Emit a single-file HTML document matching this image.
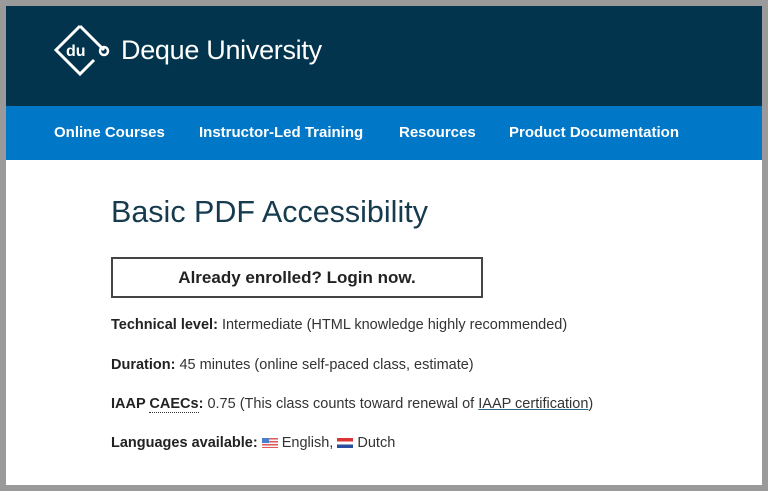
<!DOCTYPE html>
<html><head><style>
body{margin:0;width:768px;height:491px;background:#9a9a9a;font-family:"Liberation Sans",sans-serif;overflow:hidden}
#f{position:absolute;left:6px;top:6px;width:756px;height:479px;background:#fff;overflow:hidden}
#hd{height:100px;background:#02344d;position:relative}
#hd .t{position:absolute;left:115px;top:29px;color:#fff;font-size:27px;font-weight:300;letter-spacing:-0.3px}
#nav{height:54px;background:#0177c8;color:#fff;font-weight:bold;font-size:15px}
#nav span{position:absolute;top:118px}
h1{position:absolute;left:105px;top:189px;margin:0;font-weight:normal;font-size:30.5px;color:#163a4e}
.btn{position:absolute;left:105px;top:251px;width:368px;height:37px;border:2px solid #444;text-align:center;line-height:37px;font-size:17px;font-weight:bold;color:#222}
p{position:absolute;left:105px;margin:0;font-size:14.5px;color:#333}
b{color:#222}
.u{text-decoration:underline;text-decoration-color:#2a6a8a}
.fl{display:inline-block;width:16px;height:10px;vertical-align:-1px}
</style></head><body><div id="f">
<div id="hd">
<svg style="position:absolute;left:47px;top:17px" width="70" height="60" viewBox="0 0 70 60">
<path d="M27 3 L51 27 M27 3 L3 27 L27 51 L41 37" fill="none" stroke="#fff" stroke-width="3"/>
<text x="13" y="33" fill="#fff" font-family="Liberation Sans" font-weight="bold" font-size="16">du</text>
<circle cx="51" cy="28" r="4" fill="none" stroke="#fff" stroke-width="2.5"/>
</svg>
<div class="t">Deque University</div>
</div>
<div id="nav"><span style="left:48px">Online Courses</span><span style="left:193px">Instructor-Led Training</span><span style="left:393px">Resources</span><span style="left:503px">Product Documentation</span></div>
<h1>Basic PDF Accessibility</h1>
<div class="btn">Already enrolled? Login now.</div>
<p style="top:311px"><b>Technical level:</b> Intermediate (HTML knowledge highly recommended)</p>
<p style="top:351px"><b>Duration:</b> 45 minutes (online self-paced class, estimate)</p>
<p style="top:390px"><b>IAAP <span style="border-bottom:1px dotted #333">CAECs</span>:</b> 0.75 (This class counts toward renewal of <span class="u">IAAP certification</span>)</p>
<p style="top:429px"><b>Languages available:</b> <span class="fl" style="background:linear-gradient(#4a7fd0 0 50%,transparent 50%) 0 0/7px 100% no-repeat,repeating-linear-gradient(#e05a5a 0 1.5px,#f4f4f4 1.5px 3px)"></span> English, <span class="fl" style="background:linear-gradient(#d33 0 33%,#fff 33% 66%,#2a4da0 66%)"></span> Dutch</p>
</div></body></html>
